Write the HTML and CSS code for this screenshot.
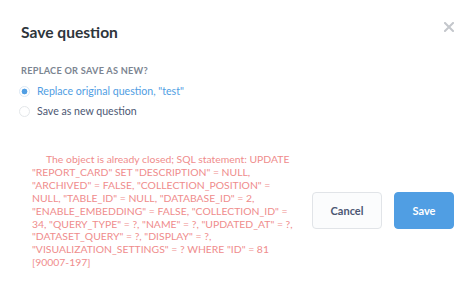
FILE: index.html
```html
<!DOCTYPE html>
<html>
<head>
<meta charset="utf-8">
<link rel="stylesheet" href="styles.css">
</head>
<body>
<div class="modal">
  <div class="header">
    <h2 class="title">Save question</h2>
    <span class="close" aria-label="close">
      <svg width="10" height="10" viewBox="0 0 10 10"><path d="M1 1L9 9M9 1L1 9" stroke="#c4c7cc" stroke-width="2" stroke-linecap="square"/></svg>
    </span>
  </div>
  <div class="section">
    <div class="label">REPLACE OR SAVE AS NEW?</div>
    <div class="radio selected"><span class="dot"></span><span>Replace original question, "test"</span></div>
    <div class="radio"><span class="dot"></span><span>Save as new question</span></div>
  </div>
  <div class="footer">
    <div class="error">The object is already closed; SQL statement: UPDATE "REPORT_CARD" SET "DESCRIPTION" = NULL, "ARCHIVED" = FALSE, "COLLECTION_POSITION" = NULL, "TABLE_ID" = NULL, "DATABASE_ID" = 2, "ENABLE_EMBEDDING" = FALSE, "COLLECTION_ID" = 34, "QUERY_TYPE" = ?, "NAME" = ?, "UPDATED_AT" = ?, "DATASET_QUERY" = ?, "DISPLAY" = ?, "VISUALIZATION_SETTINGS" = ? WHERE "ID" = 81 [90007-197]</div>
    <div class="buttons">
      <button class="btn cancel">Cancel</button>
      <button class="btn save">Save</button>
    </div>
  </div>
</div>
</body>
</html>
```
FILE: styles.css
```css
html, body {
  margin: 0;
  padding: 0;
  background: #fff;
}
body {
  font-family: Lato, "Open Sans", sans-serif;
}
.modal {
  width: 474px;
  height: 283px;
  box-sizing: border-box;
  padding: 21px 20px 0 21px;
}
.header {
  display: flex;
  justify-content: space-between;
  align-items: flex-start;
}
.title {
  margin: 0;
  font-size: 15.6px;
  font-weight: 700;
  color: #2e353b;
  line-height: 22px;
}
.close {
  display: flex;
  margin: 1px 0 0 0;
}
.section {
  margin-top: 22px;
}
.label {
  font-size: 9.2px;
  font-weight: 700;
  color: #7c8591;
  letter-spacing: 0.25px;
  line-height: 12px;
}
.radio {
  display: flex;
  align-items: center;
  gap: 7px;
  margin-top: 8px;
  font-size: 10.6px;
  color: #4c5773;
  line-height: 12px;
  margin-left: -2px;
}
.radio + .radio {
  margin-top: 8px;
}
.dot {
  width: 11px;
  height: 11px;
  border-radius: 50%;
  border: 1px solid #e4e7ea;
  box-sizing: border-box;
  background: #fff;
  flex: none;
}
.radio.selected {
  color: #509ee3;
}
.radio.selected .dot {
  background: radial-gradient(circle, #509ee3 0 2.6px, #fff 3.2px);
  border-color: #dbe8f5;
}
.footer {
  display: flex;
  align-items: center;
  margin-top: 36px;
  padding-left: 11px;
}
.error {
  width: 262px;
  font-size: 10.4px;
  line-height: 12.9px;
  color: #ef8c8c;
  text-indent: 14px;
}
.buttons {
  display: flex;
  gap: 12px;
  margin-left: auto;
  margin-top: -2px;
}
.btn {
  font-family: Lato, "Open Sans", sans-serif;
  font-size: 11px;
  font-weight: 700;
  height: 37px;
  border-radius: 4px;
  box-sizing: border-box;
  cursor: pointer;
}
.cancel {
  width: 70px;
  background: #fbfcfd;
  border: 1px solid #e1e4e8;
  color: #4c5773;
}
.save {
  width: 60px;
  background: #509ee3;
  border: 1px solid #509ee3;
  color: #fff;
}
```
